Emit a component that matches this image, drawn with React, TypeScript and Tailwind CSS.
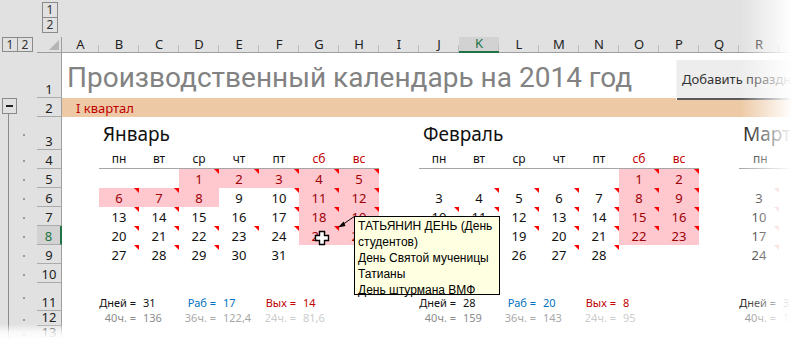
import clsx from "clsx";

type Day = { n?: number; h?: boolean; c?: boolean };

const LETTERS = ["A", "B", "C", "D", "E", "F", "G", "H", "I", "J", "K", "L", "M", "N", "O", "P", "Q", "R"];

const F = "font-['Noto_Sans',sans-serif]";

const e: Day = {};
const d = (n: number, c = false, h = false): Day => ({ n, c, h });

const JAN: Day[][] = [
  [e, e, d(1, true, true), d(2, true, true), d(3, true, true), d(4, true, true), d(5, true, true)],
  [d(6, true, true), d(7, true, true), d(8, false, true), d(9), d(10, true), d(11, true, true), d(12, true, true)],
  [d(13, true), d(14, true), d(15), d(16), d(17, true), d(18, true, true), d(19, true, true)],
  [d(20, true), d(21, true), d(22, true), d(23, true), d(24, true), d(25, true, true), d(26, false, true)],
  [d(27, true), d(28, true), d(29, true), d(30), d(31), e, e],
];

const FEB: Day[][] = [
  [e, e, e, e, e, d(1, true, true), d(2, true, true)],
  [d(3), d(4, true), d(5, true), d(6, true), d(7, true), d(8, true, true), d(9, true, true)],
  [d(10, true), d(11, true), d(12, true), d(13, true), d(14, true), d(15, true, true), d(16, true, true)],
  [d(17), d(18), d(19, true), d(20, true), d(21, true), d(22, true, true), d(23, true, true)],
  [d(24), d(25), d(26), d(27, true), d(28, true), e, e],
];

const MAR: Day[] = [e, d(3, true), d(10, true), d(17, true), d(24, true)];

const WEEK = ["пн", "вт", "ср", "чт", "пт", "сб", "вс"];

function Tri({ soft }: { soft?: boolean }) {
  return (
    <span
      className={clsx(
        "absolute right-0 top-0 h-0 w-0 border-l-[5px] border-t-[5px] border-l-transparent",
        soft ? "border-t-[#f4a0a0]" : "border-t-[#ff0000]"
      )}
    />
  );
}

function DayCell({ day }: { day: Day }) {
  return (
    <div
      className={clsx(
        "relative flex w-[40px] shrink-0 items-end justify-center pb-[2px] text-[13px] leading-none",
        day.h ? "bg-[#ffc7ce] text-[#9c0006]" : "text-[#111]"
      )}
    >
      {day.n}
      {day.c && <Tri />}
    </div>
  );
}

function Blank({ w = 40 }: { w?: number }) {
  return <div className={clsx("shrink-0", w === 37 ? "w-[37px]" : "w-[40px]")} />;
}

function Gutter({ dot, line }: { dot?: boolean; line?: boolean }) {
  return (
    <div className="relative w-[37px] shrink-0 bg-[#e1e1e1]">
      {line && <span className="absolute bottom-0 left-[8px] top-0 w-px bg-[#8c8c8c]" />}
      {dot && <span className="absolute left-[23px] top-1/2 h-[2px] w-[2px] bg-[#9a9a9a]" />}
    </div>
  );
}

function RowHead({ n, sel }: { n: number; sel?: boolean }) {
  return (
    <div
      className={clsx(
        "flex w-[25px] shrink-0 items-end justify-center border-b border-r pb-[1px] text-[13px] leading-none",
        sel
          ? "border-b-[#ababab] border-r-2 border-r-[#217346] bg-[#d2d2d2] text-[#217346]"
          : "border-b-[#ababab] border-r-[#9e9e9e] bg-[#e1e1e1] text-[#222]"
      )}
    >
      {n}
    </div>
  );
}

function Row({
  n,
  h,
  sel,
  dot = true,
  line = true,
  children,
}: {
  n: number;
  h: string;
  sel?: boolean;
  dot?: boolean;
  line?: boolean;
  children?: React.ReactNode;
}) {
  return (
    <div className={clsx("flex", h)}>
      <Gutter dot={dot} line={line} />
      <RowHead n={n} sel={sel} />
      <div className="flex flex-1 bg-white">{children}</div>
    </div>
  );
}

function WeekRow({ days }: { days: Day[] }) {
  return (
    <>
      {days.map((x, i) => (
        <DayCell key={i} day={x} />
      ))}
    </>
  );
}

function Stat({ k, v, kc }: { k: string; v: string; kc: string }) {
  return (
    <>
      <div className={clsx("flex w-[40px] shrink-0 items-end justify-end whitespace-nowrap pb-[3px] pr-[3px] text-[11px] leading-none", kc)}>
        {k}
      </div>
      <div className={clsx("flex w-[40px] shrink-0 items-end whitespace-nowrap pb-[3px] pl-[4px] text-[11px] leading-none", kc)}>
        {v}
      </div>
    </>
  );
}

function Cursor() {
  return (
    <svg className="absolute left-[314px] top-[230px]" width="16" height="16" viewBox="0 0 16 16">
      <path
        d="M5.5 1.5h5v4h4v5h-4v4h-5v-4h-4v-5h4z"
        fill="#fff"
        stroke="#000"
        strokeWidth="1.4"
      />
    </svg>
  );
}

export default function App() {
  return (
    <div className={clsx("relative h-[340px] w-[792px] overflow-hidden bg-white text-[#111]", F)}>
      {/* outline level strip */}
      <div className="flex h-[37px] bg-[#e1e1e1]">
        <div className="ml-[42px] mt-[2px] flex flex-col">
          <span className="flex h-[16px] w-[16px] items-center justify-center border border-[#8a8a8a] text-[12px] leading-none text-[#333]">1</span>
          <span className="-mt-px flex h-[16px] w-[16px] items-center justify-center border border-[#8a8a8a] text-[12px] leading-none text-[#333]">2</span>
        </div>
      </div>

      {/* column headers */}
      <div className="flex h-[16px] bg-[#e1e1e1]">
        <div className="flex w-[37px] shrink-0 items-start pl-[2px]">
          <span className="flex h-[15px] w-[16px] items-center justify-center border border-[#8a8a8a] text-[12px] leading-none text-[#333]">1</span>
          <span className="-ml-px flex h-[15px] w-[16px] items-center justify-center border border-[#8a8a8a] text-[12px] leading-none text-[#333]">2</span>
        </div>
        <div className="relative w-[25px] shrink-0 border-b border-r border-[#9e9e9e]">
          <span className="absolute bottom-[2px] right-[2px] h-0 w-0 border-b-[10px] border-l-[10px] border-b-[#b5b5b5] border-l-transparent" />
        </div>
        {LETTERS.map((l, i) => (
          <div
            key={l}
            className={clsx(
              "relative flex shrink-0 items-end justify-center pb-[1px] text-[13px] leading-none",
              i === 0 ? "w-[37px]" : "w-[40px]",
              l === "K"
                ? "border-b-2 border-b-[#217346] bg-[#d2d2d2] text-[#217346]"
                : "border-b border-b-[#9e9e9e] text-[#222]"
            )}
          >
            {l}
            <span className="absolute bottom-0 right-0 top-[8px] w-px bg-[#bdbdbd]" />
          </div>
        ))}
        <div className="flex-1 border-b border-b-[#9e9e9e]" />
      </div>

      {/* row 1: title */}
      <Row n={1} h="h-[45px]" dot={false} line={false}>
        <div className="flex w-[37px] shrink-0 items-end overflow-visible whitespace-nowrap pb-[6px] pl-[5px] font-['Roboto',sans-serif] text-[28px] leading-none text-[#828282]">
          Производственный календарь на 2014 год
        </div>
      </Row>

      {/* row 2: quarter band */}
      <div className="flex h-[19px]">
        <div className="relative w-[37px] shrink-0 bg-[#e1e1e1]">
          <span className="absolute left-[2px] top-0 flex h-[16px] w-[15px] items-center justify-center border border-[#8a8a8a]">
            <span className="h-[2px] w-[7px] bg-[#222]" />
          </span>
          <span className="absolute bottom-0 left-[8px] top-[16px] w-px bg-[#8c8c8c]" />
        </div>
        <RowHead n={2} />
        <div className="flex flex-1 items-end bg-[#edc9a5] pb-[2px] pl-[14px] text-[13px] leading-none text-[#c00000]">
          I квартал
        </div>
      </div>

      {/* row 3: month names */}
      <Row n={3} h="h-[33px]">
        <Blank w={37} />
        <div className="flex w-[320px] shrink-0 items-end pb-[6px] pl-[4px] text-[19px] leading-none">Январь</div>
        <div className="flex w-[320px] shrink-0 items-end pb-[6px] pl-[4px] text-[19px] leading-none">Февраль</div>
        <div className="flex w-[40px] shrink-0 items-end overflow-visible whitespace-nowrap pb-[6px] pl-[4px] text-[19px] leading-none">Март</div>
      </Row>

      {/* row 4: week days */}
      <Row n={4} h="h-[19px]">
        <Blank w={37} />
        {[0, 1].map((m) => (
          <div key={m} className="flex">
            {WEEK.map((w, i) => (
              <div
                key={w}
                className={clsx(
                  "flex w-[40px] shrink-0 items-end justify-center border-b border-b-[#a6a6a6] pb-[3px] text-[12px] leading-none",
                  i > 4 ? "text-[#c00000]" : "text-[#111]"
                )}
              >
                {w}
              </div>
            ))}
            <Blank />
          </div>
        ))}
        <div className="flex flex-1 items-end border-b border-b-[#a6a6a6] pb-[3px] pl-[14px] text-[12px] leading-none">пн</div>
      </Row>

      {/* rows 5-9 */}
      {JAN.map((wk, r) => (
        <Row key={r} n={r + 5} h="h-[19px]" sel={r === 3}>
          <Blank w={37} />
          <WeekRow days={wk} />
          <Blank />
          <WeekRow days={FEB[r]} />
          <Blank />
          <div className="relative flex w-[40px] shrink-0 items-end justify-center pb-[2px] text-[13px] leading-none">
            {MAR[r].n}
            {MAR[r].c && <Tri soft />}
          </div>
        </Row>
      ))}

      {/* row 10 */}
      <Row n={10} h="h-[19px]">
        <div className="w-[717px] shrink-0" />
        <div className="flex w-[40px] shrink-0 items-end justify-center pb-[2px] text-[13px] leading-none">31</div>
      </Row>

      {/* row 11: totals */}
      <Row n={11} h="h-[28px]">
        <Blank w={37} />
        <Stat k="Дней =" v="31" kc="text-[#111]" />
        <Stat k="Раб =" v="17" kc="text-[#0070c0]" />
        <Stat k="Вых =" v="14" kc="text-[#c00000]" />
        <Blank />
        <Blank />
        <Stat k="Дней =" v="28" kc="text-[#111]" />
        <Stat k="Раб =" v="20" kc="text-[#0070c0]" />
        <Stat k="Вых =" v="8" kc="text-[#c00000]" />
        <Blank />
        <Blank />
        <Stat k="Дней =" v="31" kc="text-[#111]" />
      </Row>

      {/* row 12: hours */}
      <Row n={12} h="h-[15px]">
        <Blank w={37} />
        <Stat k="40ч. =" v="136" kc="text-[#8c8c8c]" />
        <Stat k="36ч. =" v="122,4" kc="text-[#a8a8a8]" />
        <Stat k="24ч. =" v="81,6" kc="text-[#cccccc]" />
        <Blank />
        <Blank />
        <Stat k="40ч. =" v="159" kc="text-[#8c8c8c]" />
        <Stat k="36ч. =" v="143" kc="text-[#a8a8a8]" />
        <Stat k="24ч. =" v="95" kc="text-[#cccccc]" />
        <Blank />
        <Blank />
        <Stat k="40ч. =" v="159" kc="text-[#8c8c8c]" />
      </Row>

      <Row n={13} h="h-[15px]" />

      {/* active cell K8 */}
      <div className="absolute left-[458px] top-[225px] h-[21px] w-[42px] border-2 border-[#217346]" />

      {/* button */}
      <div className="absolute left-[677px] top-[60px] flex h-[40px] w-[140px] items-center border-b-2 border-b-[#5a5a5a] bg-[#ededed] pl-[5px] pt-[2px] text-[13px] text-[#333] shadow-[-1px_0_0_#f6f6f6]">
        Добавить праздники
      </div>

      {/* comment arrow + tooltip */}
      <svg className="absolute left-[330px] top-[205px]" width="30" height="30" viewBox="0 0 30 30">
        <line x1="25" y1="11" x2="12" y2="20" stroke="#000" strokeWidth="1" />
        <path d="M8 22.5 L13.5 16.5 L15.5 21 Z" fill="#000" />
      </svg>
      <div className="absolute left-[354px] top-[216px] h-[79px] w-[146px] border border-black bg-[#ffffe1] pl-[3px] pt-[1px] font-['Liberation_Sans',sans-serif] text-[12px] leading-[16px] text-black">
        <div>ТАТЬЯНИН ДЕНЬ (День</div>
        <div>студентов)</div>
        <div>День Святой мученицы</div>
        <div>Татианы</div>
        <div>День штурмана ВМФ</div>
      </div>

      <Cursor />

      {/* screenshot fades */}
      <div className="pointer-events-none absolute bottom-0 right-0 top-0 w-[52px] bg-gradient-to-r from-transparent to-white" />
      <div className="pointer-events-none absolute bottom-0 left-0 right-0 h-[16px] bg-gradient-to-b from-transparent via-[#ffffffcc] to-white" />
    </div>
  );
}
